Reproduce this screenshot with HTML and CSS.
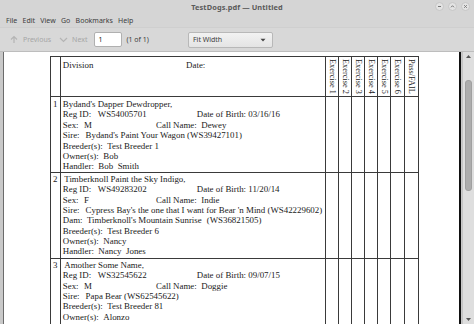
FILE: index.html
```html
<!DOCTYPE html>
<html>
<head>
<meta charset="utf-8">
<link rel="stylesheet" href="styles.css">
</head>
<body>
<div class="win">
  <div class="titlebar">
    <div></div>
    <div class="title">TestDogs.pdf — Untitled</div>
    <div class="wbtns">
      <span class="wb"><svg width="7" height="7" viewBox="0 0 7 7"><path d="M2 3.5h3" stroke="#777" stroke-width="1"/></svg></span>
      <span class="wb"><svg width="7" height="7" viewBox="0 0 7 7"><path d="M2 4.3l1.5-1.6 1.5 1.6" stroke="#777" stroke-width="1" fill="none"/></svg></span>
      <span class="wb"><svg width="7" height="7" viewBox="0 0 7 7"><path d="M2.2 2.2l2.6 2.6M4.8 2.2l-2.6 2.6" stroke="#777" stroke-width="1"/></svg></span>
    </div>
  </div>
  <div class="menubar">
    <span>File</span><span>Edit</span><span>View</span><span>Go</span><span>Bookmarks</span><span>Help</span>
  </div>
  <div class="toolbar">
    <div class="tbtn">
      <svg width="8" height="9" viewBox="0 0 8 9"><path d="M1 4.5L4 1.5 7 4.5M4 1.8V8" stroke="#b4b4b4" stroke-width="1.2" fill="none"/></svg>
      <span>Previous</span>
    </div>
    <div class="tbtn next">
      <svg width="9" height="7" viewBox="0 0 9 7"><path d="M1 2l3.5 3.5L8 2" stroke="#b4b4b4" stroke-width="1.2" fill="none"/></svg>
      <span>Next</span>
    </div>
    <div class="pagebox">1</div>
    <span class="pagecount">(1 of 1)</span>
    <div class="combo"><span>Fit Width</span><svg width="6" height="4" viewBox="0 0 6 4"><path d="M0.5 0.8h5L3 3.5z" fill="#444"/></svg></div>
  </div>
  <div class="viewer">
    <div class="doc">
      <div class="page">
        <table class="sheet">
          <colgroup>
            <col class="c-num"><col class="c-txt">
            <col class="c-ex"><col class="c-ex"><col class="c-ex"><col class="c-ex"><col class="c-ex"><col class="c-ex2"><col class="c-ex2">
          </colgroup>
          <tr class="r-head">
            <td></td>
            <td class="txt"><span class="w-div">Division</span>Date:</td>
            <td class="vh"><div class="vwrap"><span class="vt">Exercise 1</span></div></td>
            <td class="vh"><div class="vwrap"><span class="vt">Exercise 2</span></div></td>
            <td class="vh"><div class="vwrap"><span class="vt">Exercise 3</span></div></td>
            <td class="vh"><div class="vwrap"><span class="vt">Exercise 4</span></div></td>
            <td class="vh"><div class="vwrap"><span class="vt">Exercise 5</span></div></td>
            <td class="vh"><div class="vwrap"><span class="vt">Exercise 6</span></div></td>
            <td class="vh"><div class="vwrap"><span class="vt">Pass/FAIL</span></div></td>
          </tr>
          <tr class="r1">
            <td class="num">1</td>
            <td class="txt">
              <div class="ln">Bydand's Dapper Dewdropper,</div>
              <div class="ln"><span class="w-reg">Reg ID:</span><span class="w-id">WS54005701</span>Date of Birth: 03/16/16</div>
              <div class="ln"><span class="w-sex">Sex:</span><span class="w-sexv">M</span><span class="k">Call Name:</span>Dewey</div>
              <div class="ln"><span class="k-wide">Sire:</span>Bydand's Paint Your Wagon (WS39427101)</div>
              <div class="ln"><span class="k">Breeder(s):</span>Test Breeder 1</div>
              <div class="ln"><span class="k">Owner(s):</span>Bob</div>
              <div class="ln"><span class="k">Handler:</span><span class="k">Bob</span>Smith</div>
            </td>
            <td></td><td></td><td></td><td></td><td></td><td></td><td></td>
          </tr>
          <tr class="r2">
            <td class="num">2</td>
            <td class="txt">
              <div class="ln"><span class="lead">Timberknoll Paint the Sky Indigo,</span></div>
              <div class="ln"><span class="w-reg">Reg ID:</span><span class="w-id">WS49283202</span>Date of Birth: 11/20/14</div>
              <div class="ln"><span class="w-sex">Sex:</span><span class="w-sexv">F</span><span class="k">Call Name:</span>Indie</div>
              <div class="ln"><span class="k-wide">Sire:</span>Cypress Bay's the one that I want for Bear 'n Mind (WS42229602)</div>
              <div class="ln"><span class="k">Dam:</span>Timberknoll's Mountain Sunrise<span class="sp"></span>(WS36821505)</div>
              <div class="ln"><span class="k">Breeder(s):</span>Test Breeder 6</div>
              <div class="ln"><span class="k">Owner(s):</span>Nancy</div>
              <div class="ln"><span class="k">Handler:</span><span class="k">Nancy</span>Jones</div>
            </td>
            <td></td><td></td><td></td><td></td><td></td><td></td><td></td>
          </tr>
          <tr class="r3">
            <td class="num">3</td>
            <td class="txt">
              <div class="ln"><span class="lead">Amother Some Name,</span></div>
              <div class="ln"><span class="w-reg">Reg ID:</span><span class="w-id">WS32545622</span>Date of Birth: 09/07/15</div>
              <div class="ln"><span class="w-sex">Sex:</span><span class="w-sexv">M</span><span class="k">Call Name:</span>Doggie</div>
              <div class="ln"><span class="k-wide">Sire:</span>Papa Bear (WS62545622)</div>
              <div class="ln"><span class="k">Breeder(s):</span>Test Breeder 81</div>
              <div class="ln"><span class="k">Owner(s):</span>Alonzo</div>
              <div class="ln">&nbsp;</div>
            </td>
            <td></td><td></td><td></td><td></td><td></td><td></td><td></td>
          </tr>
        </table>
      </div>
    </div>
    <div class="scrollbar">
      <div class="sb-arrow"><svg width="5" height="3" viewBox="0 0 5 3"><path d="M0 3L2.5 0 5 3z" fill="#555"/></svg></div>
      <div class="sb-track"><div class="sb-thumb"></div></div>
      <div class="sb-arrow"><svg width="5" height="3" viewBox="0 0 5 3"><path d="M0 0h5L2.5 3z" fill="#555"/></svg></div>
    </div>
  </div>
</div>
</body>
</html>
```
FILE: styles.css
```css
* { box-sizing: border-box; }
html, body { margin: 0; padding: 0; }
body {
  width: 474px;
  height: 324px;
  overflow: hidden;
  background: #d6d6d6;
  font-family: "Noto Sans", "DejaVu Sans", sans-serif;
}
.win { width: 474px; height: 324px; display: flex; flex-direction: column; }

.titlebar {
  height: 13px;
  display: grid;
  grid-template-columns: 1fr auto 1fr;
  align-items: center;
  background: #d5d5d5;
}
.title {
  font-size: 7.4px;
  font-weight: bold;
  color: #5a5a5a;
  letter-spacing: 0.1px;
}
.wbtns { display: flex; justify-content: flex-end; gap: 4px; padding-right: 4px; }
.wb {
  width: 9px; height: 9px; border-radius: 50%;
  background: #e3e3e3;
  border: 1px solid #c6c6c6;
  display: flex; align-items: center; justify-content: center;
}
.wb svg { display: block; }

.menubar {
  height: 14px;
  display: flex;
  align-items: center;
  gap: 5.3px;
  padding-left: 6px;
  font-size: 7px;
  color: #3c3c3c;
  background: #d5d5d5;
}

.toolbar {
  height: 25px;
  display: flex;
  align-items: center;
  padding-left: 10px;
  background: #d8d8d8;
  font-size: 7px;
  border-top: 1px solid #cfcfcf;
  border-bottom: 1px solid #bdbdbd;
}
.tbtn { display: flex; align-items: center; gap: 5px; color: #a6a6a6; }
.tbtn svg { display: block; }
.next { margin-left: 8px; gap: 4px; }
.pagebox {
  margin-left: 7px;
  width: 28px; height: 15px;
  background: #fff;
  border: 1px solid #b0b0b0;
  border-radius: 2px;
  color: #222;
  padding-left: 3px;
  line-height: 13px;
}
.pagecount { margin-left: 4px; color: #3c3c3c; }
.combo {
  margin-left: 39px;
  width: 85px; height: 16px;
  background: linear-gradient(#f2f2f2, #e4e4e4);
  border: 1px solid #b8b8b8;
  border-radius: 2px;
  display: flex; align-items: center; justify-content: space-between;
  padding: 0 6px 0 4px;
  color: #3c3c3c;
}
.combo svg { display: block; }

.viewer { flex: 1; display: flex; min-height: 0; }
.doc {
  flex: 1;
  background: #c9c9c9;
  padding-left: 3px;
  display: flex;
  overflow: hidden;
}
.page {
  flex: 1;
  margin-right: 1px;
  background: #fff;
  border-left: 1px solid #6b6b6b;
  border-right: 2px solid #111;
  padding: 4px 0 0 45.5px;
  overflow: hidden;
}
.sheet {
  border-collapse: collapse;
  table-layout: fixed;
  width: 368px;
  font-family: "Liberation Serif", "Times New Roman", serif;
  font-size: 8.9px;
  color: #1a1a1a;
}
.sheet td {
  border: 1px solid #3a3a3a;
  vertical-align: top;
  padding: 0;
}
.c-num { width: 10px; }
.c-txt { width: 265px; }
.c-ex { width: 13px; }
.c-ex2 { width: 14px; }
.r-head { height: 40px; }
.r1 { height: 75px; }
.r2 { height: 86px; }
.r3 { height: 80px; }
.num { padding: 2px 0 0 2.5px !important; line-height: 10.4px; }
.txt { padding: 2px 0 0 2.3px !important; white-space: nowrap; }
.r-head .txt { padding-top: 2.5px !important; line-height: 10.4px; }
.r2 .txt, .r3 .txt { padding-top: 1px !important; }
.r2 .num, .r3 .num { padding-top: 1px !important; }
.ln { line-height: 10.4px; height: 10.4px; }
.lead { margin-left: 1.5px; }
.w-div { display: inline-block; width: 123.3px; }
.w-reg { display: inline-block; width: 35px; }
.w-id { display: inline-block; width: 99px; }
.w-sex { display: inline-block; width: 21.3px; }
.w-sexv { display: inline-block; width: 72px; }
.k { margin-right: 4.5px; }
.k-wide { margin-right: 6px; }
.sp { display: inline-block; width: 5px; }

.vh { padding-top: 2px !important; }
.vwrap { display: flex; justify-content: center; }
.vt {
  writing-mode: vertical-rl;
  font-size: 8.3px;
  line-height: 10px;
  white-space: nowrap;
}

.scrollbar {
  width: 12px;
  background: #dedede;
  border-left: 1px solid #c4c4c4;
  display: flex;
  flex-direction: column;
}
.sb-arrow { height: 9px; display: flex; align-items: center; justify-content: center; }
.sb-arrow svg { display: block; }
.sb-track { flex: 1; padding: 19px 2px 0 2px; }
.sb-thumb {
  height: 111px;
  background: #adadad;
  border: 1px solid #a0a0a0;
  border-radius: 3px;
}
```
